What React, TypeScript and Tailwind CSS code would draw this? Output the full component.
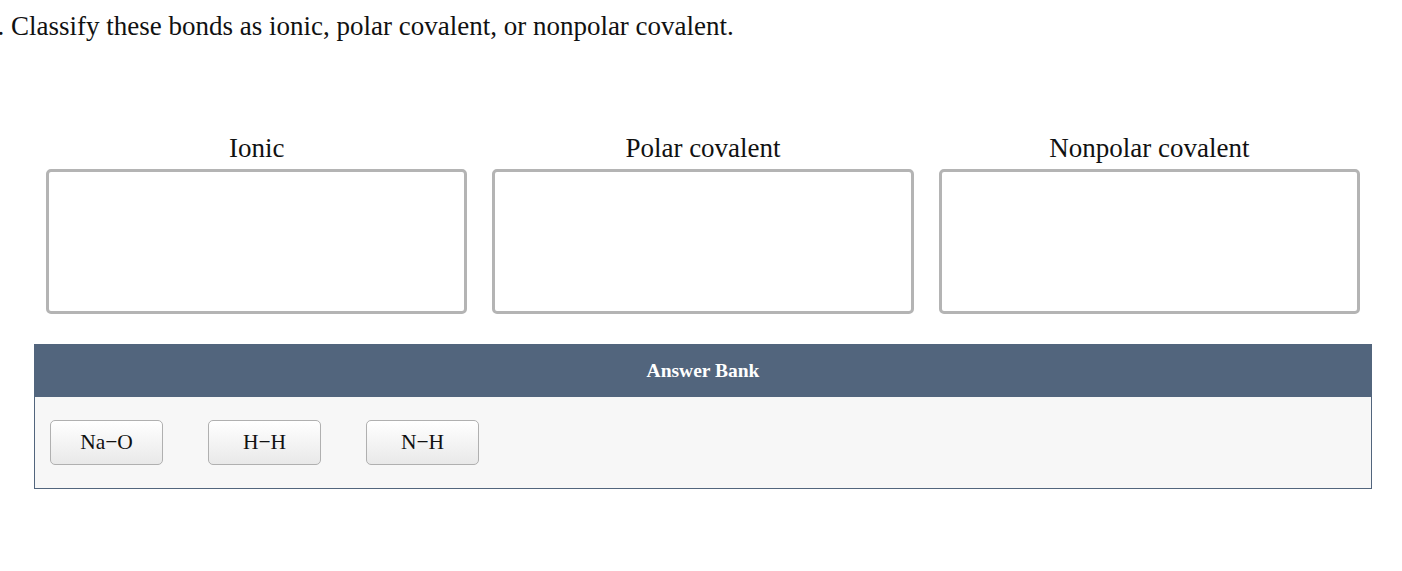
const categories = ["Ionic", "Polar covalent", "Nonpolar covalent"];
const answers = ["Na\u2212O", "H\u2212H", "N\u2212H"];

function DropZone({ label }: { label: string }) {
  return (
    <div className="flex flex-col items-center">
      <div className="h-[38px] text-[27px] leading-[38px] text-[#111]">{label}</div>
      <div className="mt-[2px] h-[145px] w-full rounded-[5px] border-[3px] border-[#b4b4b4] bg-white" />
    </div>
  );
}

function Tile({ text }: { text: string }) {
  return (
    <div className="flex h-[45px] w-[113px] items-center justify-center rounded-[5px] border border-[#b0b0b0] bg-gradient-to-b from-white to-[#e9e9e9] text-[21.5px] text-[#111]">
      {text}
    </div>
  );
}

export default function App() {
  return (
    <div className="h-[571px] w-[1402px] overflow-hidden bg-white font-['Liberation_Serif',serif]">
      <p className="ml-[-16px] pt-[9px] text-[27px] leading-[34px] text-[#111]">
        1. Classify these bonds as ionic, polar covalent, or nonpolar covalent.
      </p>

      <div className="ml-[34px] w-[1338px]">
        <div className="mt-[86px] grid grid-cols-3 gap-[25px] px-[12px]">
          {categories.map((c) => (
            <DropZone key={c} label={c} />
          ))}
        </div>

        <div className="mt-[30px] border border-[#52657d]">
          <div className="flex h-[52px] items-center justify-center bg-[#52657d] text-[19.5px] font-bold text-white">
            Answer Bank
          </div>
          <div className="flex gap-[45px] bg-[#f7f7f7] px-[15px] py-[23px]">
            {answers.map((a) => (
              <Tile key={a} text={a} />
            ))}
          </div>
        </div>
      </div>
    </div>
  );
}
